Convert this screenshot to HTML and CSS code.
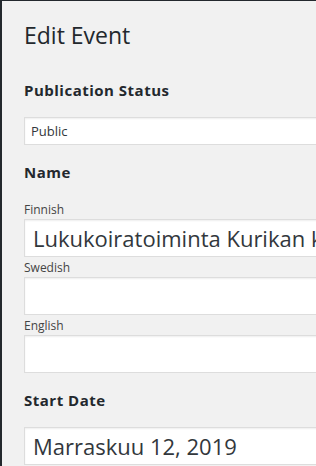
FILE: index.html
```html
<!DOCTYPE html>
<html lang="en">
<head>
    <meta charset="UTF-8">
    <meta name="viewport" content="width=device-width, initial-scale=1.0">
    <title>Edit Event</title>
    <link rel="stylesheet" href="styles.css">
</head>
<body>
    <div class="frame">
        <h1>Edit Event</h1>

        <!-- Publication status -->
        <div class="group">
            <h2>Publication Status</h2>
            <select class="select">
                <option>Public</option>
            </select>
        </div>

        <!-- Name in each language -->
        <div class="group">
            <h2>Name</h2>
            <div class="lang">
                <label class="lang-label">Finnish</label>
                <input class="text-input" type="text" value="Lukukoiratoiminta Kurikan kirjastossa">
            </div>
            <div class="lang">
                <label class="lang-label">Swedish</label>
                <input class="text-input" type="text" value="">
            </div>
            <div class="lang">
                <label class="lang-label">English</label>
                <input class="text-input" type="text" value="">
            </div>
        </div>

        <!-- Start date -->
        <div class="group">
            <h2>Start Date</h2>
            <input class="text-input" type="text" value="Marraskuu 12, 2019">
        </div>
    </div>
</body>
</html>
```

FILE: styles.css
```css
:root {
    --bg-primary: #f1f1f1;
    --frame-color: #23282d;
    --text-primary: #23282d;
    --text-input: #32373c;
    --border-color: #dddddd;
    --font-primary: 'Open Sans', 'Noto Sans', sans-serif;
}

body {
    margin: 0;
    padding: 0;
    font-family: var(--font-primary);
    background-color: var(--bg-primary);
    color: var(--text-primary);
    overflow: hidden;
}

.frame {
    width: 600px;
    min-height: 466px;
    box-sizing: border-box;
    border-top: 1px solid var(--frame-color);
    border-left: 2px solid var(--frame-color);
    padding: 20px 0 0 22px;
}

h1 {
    margin: 0;
    font-size: 23px;
    font-weight: 400;
    line-height: 29px;
}

h2 {
    margin: 0;
    font-size: 15px;
    font-weight: 700;
    line-height: 20px;
    letter-spacing: 0.5px;
}

.group {
    margin-top: 30px;
}

.group + .group {
    margin-top: 17px;
}

.group > h2 {
    margin-bottom: 17px;
}

.group > h2 + .lang {
    margin-top: 20px;
}

.select {
    display: block;
    width: 100%;
    height: 28px;
    margin: 0;
    padding: 0 6px;
    font-family: var(--font-primary);
    font-size: 13px;
    color: var(--text-input);
    background-color: #fff;
    border: 1px solid var(--border-color);
    border-radius: 0;
    -webkit-appearance: none;
    appearance: none;
    box-shadow: inset 0 1px 2px rgba(0, 0, 0, 0.07);
}

.lang + .lang {
    margin-top: 3px;
}

.lang-label {
    display: block;
    font-size: 12px;
    line-height: 16px;
    color: #444;
    margin-bottom: 1px;
}

.text-input {
    display: block;
    width: 100%;
    height: 38px;
    box-sizing: border-box;
    margin: 0;
    padding: 0 8px;
    font-family: var(--font-primary);
    font-size: 22px;
    color: var(--text-input);
    background-color: #fff;
    border: 1px solid var(--border-color);
    box-shadow: inset 0 1px 2px rgba(0, 0, 0, 0.07);
    outline: none;
}
```
